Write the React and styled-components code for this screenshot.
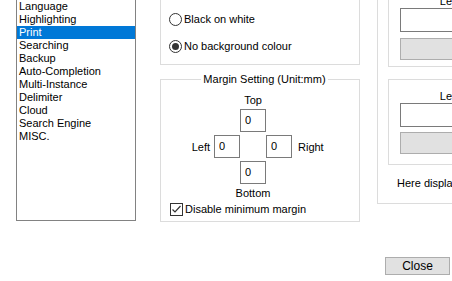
import React from 'react';
import styled, { createGlobalStyle } from 'styled-components';

const GlobalStyle = createGlobalStyle`
  html, body {
    margin: 0;
    padding: 0;
    background: #fff;
    overflow: hidden;
  }
  body {
    font-family: "Liberation Sans", Arial, sans-serif;
    font-size: 11px;
    color: #000;
  }
`;

const Page = styled.div`
  display: flex;
  align-items: flex-start;
  padding-left: 16px;
  width: 700px;
`;

const ListBox = styled.ul`
  list-style: none;
  margin: -1px 0 0 0;
  padding: 0;
  width: 120px;
  height: 222px;
  box-sizing: border-box;
  border: 1px solid #828282;
  overflow: hidden;
  flex-shrink: 0;
`;

const ListItem = styled.li`
  height: 13px;
  line-height: 13px;
  padding-left: 2px;
  white-space: nowrap;
  background: ${p => (p.$selected ? '#0078d7' : 'transparent')};
  color: ${p => (p.$selected ? '#fff' : '#000')};
`;

const MiddleColumn = styled.div`
  display: flex;
  flex-direction: column;
  width: 200px;
  margin-left: 24px;
  flex-shrink: 0;
`;

const ColourGroup = styled.div`
  display: flex;
  flex-direction: column;
  gap: 14px;
  height: 85px;
  box-sizing: border-box;
  margin-top: -20px;
  padding: 32px 0 0 8px;
  border: 1px solid #dcdcdc;
`;

const OptionRow = styled.label`
  display: flex;
  align-items: center;
  height: 13px;
  line-height: 13px;
  gap: 2px;
  white-space: nowrap;
`;

const RadioCircle = styled.span`
  display: grid;
  place-items: center;
  width: 13px;
  height: 13px;
  box-sizing: border-box;
  border: 1px solid #333;
  border-radius: 50%;
  background: #fff;
  &::after {
    content: '';
    width: 7px;
    height: 7px;
    border-radius: 50%;
    background: ${p => (p.$checked ? '#333' : 'transparent')};
  }
`;

const CheckBox = styled.span`
  display: grid;
  place-items: center;
  width: 13px;
  height: 13px;
  box-sizing: border-box;
  border: 1px solid #333;
  background: #fff;
`;

const MarginGroup = styled.fieldset`
  margin: 8px 0 0 0;
  padding: 8px 0 5px 9px;
  border: 1px solid #dcdcdc;
  min-width: 0;
  box-sizing: border-box;
  width: 200px;
`;

const Legend = styled.legend`
  margin: 0 auto;
  padding: 0 2px;
  line-height: 13px;
  white-space: nowrap;
`;

const MarginGrid = styled.div`
  display: grid;
  grid-template-columns: 44px 26px 26px 26px auto;
  grid-template-rows: 12px 23px 23px 23px 12px;
  row-gap: 3px;
  align-items: center;
`;

const GridLabel = styled.span`
  grid-column: ${p => p.$col};
  grid-row: ${p => p.$row};
  line-height: 12px;
  white-space: nowrap;
  justify-self: ${p => p.$align || 'center'};
  padding: ${p => p.$pad || '0'};
`;

const MarginInput = styled.input`
  grid-column: ${p => p.$col};
  grid-row: ${p => p.$row};
  width: 26px;
  height: 23px;
  box-sizing: border-box;
  margin: 0;
  padding: 0 0 1px 4px;
  border: 1px solid #7a7a7a;
  font: inherit;
  color: #000;
  background: #fff;
  outline: none;
`;

const CheckRow = styled(OptionRow)`
  margin-top: 4px;
`;

const RightColumn = styled.div`
  display: flex;
  flex-direction: column;
  align-items: flex-start;
  margin-left: 17px;
  flex-shrink: 0;
`;

const OuterGroup = styled.div`
  display: flex;
  flex-direction: column;
  width: 260px;
  margin-top: -30px;
  padding: 13px 0 14px 10px;
  border: 1px solid #dcdcdc;
`;

const SubGroup = styled.div`
  display: flex;
  flex-direction: column;
  align-items: flex-start;
  width: 250px;
  margin-top: ${p => p.$top || 0}px;
  padding: 10px 0 ${p => p.$bottom}px 11px;
  border: 1px solid #dcdcdc;
`;

const FieldLabel = styled.span`
  width: 120px;
  text-align: center;
  line-height: 12px;
  margin-bottom: 1px;
  white-space: nowrap;
`;

const TextField = styled.div`
  width: 120px;
  height: 24px;
  box-sizing: border-box;
  border: 1px solid #7a7a7a;
  background: #fff;
`;

const GreyButton = styled.div`
  width: 120px;
  height: 22px;
  box-sizing: border-box;
  margin-top: ${p => p.$gap}px;
  border: 1px solid #adadad;
  background: #e1e1e1;
`;

const HintText = styled.span`
  margin: 12px 0 0 9px;
  line-height: 12px;
  white-space: nowrap;
`;

const CloseButton = styled.button`
  width: 65px;
  height: 18px;
  margin: 53px 0 0 8px;
  padding: 0;
  box-sizing: border-box;
  border: 1px solid #adadad;
  background: #e1e1e1;
  font: inherit;
  font-size: 12px;
  color: #000;
  line-height: 16px;
`;

const categories = [
  'Language', 'Highlighting', 'Print', 'Searching', 'Backup', 'Auto-Completion',
  'Multi-Instance', 'Delimiter', 'Cloud', 'Search Engine', 'MISC.',
];

function Radio({ checked, children }) {
  return (
    <OptionRow>
      <RadioCircle $checked={checked} />
      {children}
    </OptionRow>
  );
}

export default function App() {
  return (
    <>
      <GlobalStyle />
      <Page>
        <ListBox>
          {categories.map(c => (
            <ListItem key={c} $selected={c === 'Print'}>{c}</ListItem>
          ))}
        </ListBox>

        <MiddleColumn>
          <ColourGroup>
            <Radio>Black on white</Radio>
            <Radio checked>No background colour</Radio>
          </ColourGroup>

          <MarginGroup>
            <Legend>Margin Setting (Unit:mm)</Legend>
            <MarginGrid>
              <GridLabel $col={3} $row={1}>Top</GridLabel>
              <MarginInput $col={3} $row={2} defaultValue="0" readOnly />
              <GridLabel $col={1} $row={3} $align="end" $pad="0 4px 0 0">Left</GridLabel>
              <MarginInput $col={2} $row={3} defaultValue="0" readOnly />
              <MarginInput $col={4} $row={3} defaultValue="0" readOnly />
              <GridLabel $col={5} $row={3} $align="start" $pad="0 0 0 6px">Right</GridLabel>
              <MarginInput $col={3} $row={4} defaultValue="0" readOnly />
              <GridLabel $col={3} $row={5}>Bottom</GridLabel>
            </MarginGrid>
            <CheckRow>
              <CheckBox>
                <svg width="11" height="11" viewBox="0 0 11 11">
                  <polyline points="1.5,5.5 4,8 9.5,2" fill="none" stroke="#333" strokeWidth="1.2" />
                </svg>
              </CheckBox>
              Disable minimum margin
            </CheckRow>
          </MarginGroup>
        </MiddleColumn>

        <RightColumn>
          <OuterGroup>
            <SubGroup $bottom={6}>
              <FieldLabel>Left part</FieldLabel>
              <TextField />
              <GreyButton $gap={6} />
            </SubGroup>
            <SubGroup $top={12} $bottom={10}>
              <FieldLabel>Left part</FieldLabel>
              <TextField />
              <GreyButton $gap={5} />
            </SubGroup>
            <HintText>Here display your variables</HintText>
          </OuterGroup>
          <CloseButton>Close</CloseButton>
        </RightColumn>
      </Page>
    </>
  );
}
